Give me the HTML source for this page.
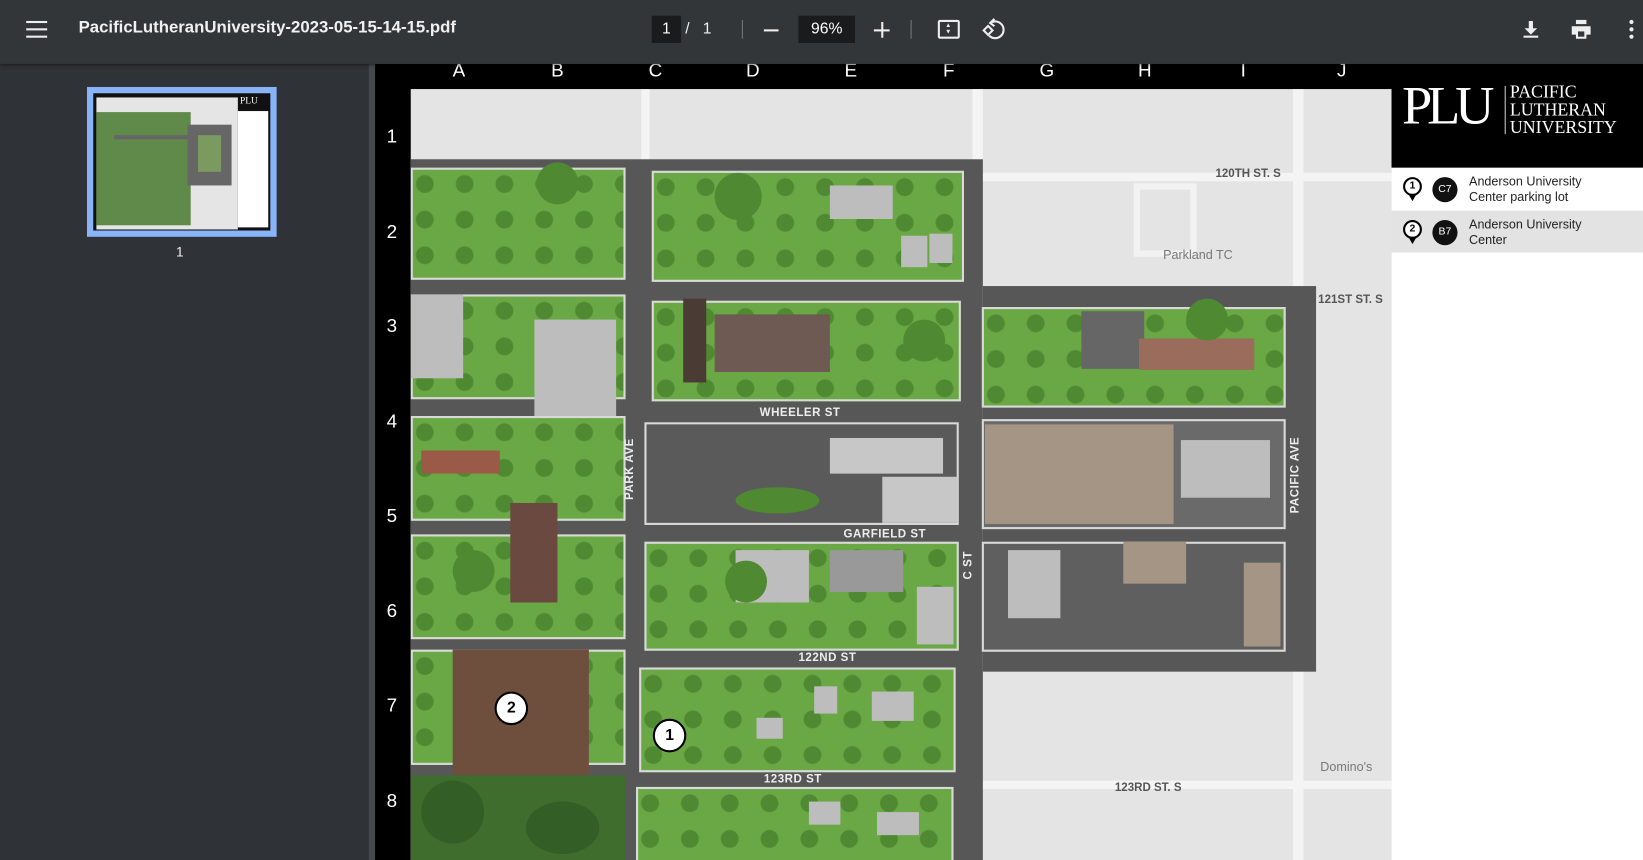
<!DOCTYPE html>
<html><head><meta charset="utf-8"><style>
*{margin:0;padding:0;box-sizing:border-box}
html,body{width:1643px;height:860px;overflow:hidden;background:#2f3236;font-family:"Liberation Sans",sans-serif}
#w{position:absolute;left:0;top:0;width:1643px;height:860px;overflow:hidden}
#s{position:absolute;left:0;top:0;width:1568px;height:821px;overflow:hidden;transform:scale(1.04783);transform-origin:0 0}
.a{position:absolute}
.g{position:absolute;background:#6aa846 radial-gradient(circle at 30% 40%,#4f8a33 0 8px,transparent 9px) 0 0/38px 34px;border:2px solid #d9d9d9}
.t{position:absolute;border-radius:50%;background:#4f8a33}
.b{position:absolute;background:#bdbdbd}
.r{position:absolute;color:#eee;font-size:11px;font-weight:bold;letter-spacing:.5px}
.m{position:absolute;color:#555;font-size:11px}
</style></head><body><div id="w"><div id="s">
<div class="a" style="left:0;top:0;width:1568px;height:61px;background:#323639;box-shadow:0 1px 3px rgba(0,0,0,.5);z-index:2"></div>
<div class="a" style="left:25px;top:20px;width:20px;height:2px;background:#eee;box-shadow:0 7px 0 #eee,0 14px 0 #eee;z-index:3"></div>
<div class="a" style="left:75px;top:18px;color:#f1f1f1;font-size:16px;font-weight:bold;z-index:3">PacificLutheranUniversity-2023-05-15-14-15.pdf</div>
<div style="position:absolute;left:0;top:0;z-index:3">
<div class="a" style="left:622px;top:15px;width:28px;height:26px;background:#191b1c;color:#fff;font-size:15px;text-align:center;line-height:26px">1</div>
<div class="a" style="left:654px;top:19px;color:#eee;font-size:15px;white-space:nowrap">/&nbsp;&nbsp;&nbsp;1</div>
<div class="a" style="left:708px;top:19px;width:1px;height:18px;background:#777"></div>
<div class="a" style="left:729px;top:28px;width:14px;height:2px;background:#eee"></div>
<div class="a" style="left:762px;top:15px;width:54px;height:26px;background:#191b1c;color:#fff;font-size:15px;text-align:center;line-height:26px">96%</div>
<div class="a" style="left:834px;top:28px;width:15px;height:2px;background:#eee"></div>
<div class="a" style="left:841px;top:21px;width:2px;height:15px;background:#eee"></div>
<div class="a" style="left:869px;top:19px;width:1px;height:18px;background:#777"></div>
<div class="a" style="left:895px;top:19px;width:21px;height:18px;border:2px solid #eee;border-radius:2px"></div>
<div class="a" style="left:902px;top:22px;color:#eee;font-size:6px;line-height:6px">▲<br>▼</div>
<svg class="a" style="left:936px;top:16px" width="24" height="24" viewBox="0 0 24 24" fill="none" stroke="#eee" stroke-width="2"><path d="M9 6a8 8 0 1 1-1 12"/><path d="M13 2l-4 4 4 3"/><rect x="4" y="10" width="6" height="6" transform="rotate(45 7 13)"/></svg>
<svg class="a" style="left:1451px;top:18px" width="20" height="20" viewBox="0 0 20 20" fill="#eee"><path d="M8 2h4v7h4l-6 6-6-6h4z"/><rect x="3" y="16" width="14" height="2"/></svg>
<svg class="a" style="left:1498px;top:17px" width="22" height="22" viewBox="0 0 22 22" fill="#eee"><rect x="6" y="2" width="10" height="4"/><path d="M2 8h18v8h-4v4H6v-4H2z"/><rect x="8" y="13" width="6" height="5" fill="#323639"/></svg>
<div class="a" style="left:1555px;top:19px;width:4px;height:4px;border-radius:2px;background:#eee;box-shadow:0 7px 0 #eee,0 14px 0 #eee"></div>
</div>
<div class="a" style="left:352px;top:61px;width:6px;height:760px;background:#45494d"></div>
<div class="a" style="left:83px;top:83px;width:181px;height:143px;background:#8ab4f8"></div>
<div class="a" style="left:89px;top:89px;width:169px;height:131px;background:#111;overflow:hidden">
 <div class="a" style="left:3px;top:4px;width:135px;height:126px;background:#e5e5e5"></div>
 <div class="a" style="left:3px;top:18px;width:90px;height:108px;background:#5f8a4a"></div>
 <div class="a" style="left:20px;top:40px;width:110px;height:4px;background:#666"></div>
 <div class="a" style="left:90px;top:30px;width:42px;height:58px;background:#666"></div>
 <div class="a" style="left:100px;top:40px;width:22px;height:35px;background:#7a9a60"></div>
 <div class="a" style="left:138px;top:17px;width:29px;height:111px;background:#fff"></div>
 <div class="a" style="left:140px;top:2px;color:#fff;font-family:'Liberation Serif';font-size:9px">PLU</div>
</div>
<div class="a" style="left:168px;top:233px;color:#eee;font-size:13px">1</div>
<div class="a" style="left:358px;top:61px;width:1210px;height:760px;background:#000"></div>
<div class="a" style="left:392px;top:85px;width:936px;height:736px;background:#e4e4e4;overflow:hidden">
 <div class="a" style="left:536px;top:0;width:10px;height:736px;background:#f4f4f4"></div>
 <div class="a" style="left:842px;top:0;width:10px;height:736px;background:#f4f4f4"></div>
 <div class="a" style="left:540px;top:80px;width:400px;height:8px;background:#f4f4f4"></div>
 <div class="a" style="left:540px;top:660px;width:400px;height:8px;background:#f4f4f4"></div>
 <div class="a" style="left:220px;top:0;width:8px;height:70px;background:#f4f4f4"></div>
 <div class="a" style="left:690px;top:90px;width:60px;height:70px;border:6px solid #f2f2f2"></div>
 <div class="a" style="left:0;top:67px;width:546px;height:700px;background:#575757"></div>
 <div class="a" style="left:546px;top:188px;width:318px;height:368px;background:#575757"></div>
 <div class="g" style="left:0;top:75px;width:205px;height:107px"></div>
 <div class="g" style="left:230px;top:78px;width:298px;height:106px"></div>
 <div class="b" style="left:468px;top:140px;width:25px;height:30px"></div>
 <div class="b" style="left:495px;top:138px;width:22px;height:28px"></div>
 <div class="b" style="left:400px;top:92px;width:60px;height:32px"></div>
 <div class="g" style="left:0;top:196px;width:205px;height:100px"></div>
 <div class="b" style="left:0;top:196px;width:50px;height:80px"></div>
 <div class="b" style="left:118px;top:220px;width:78px;height:110px"></div>
 <div class="g" style="left:230px;top:202px;width:295px;height:96px"></div>
 <div class="a" style="left:260px;top:200px;width:22px;height:80px;background:#4a3c34"></div>
 <div class="a" style="left:290px;top:215px;width:110px;height:55px;background:#6e5a52"></div>
 <div class="g" style="left:545px;top:208px;width:290px;height:96px"></div>
 <div class="b" style="left:640px;top:212px;width:60px;height:55px;background:#666"></div>
 <div class="a" style="left:695px;top:238px;width:110px;height:30px;background:#9a6c5c"></div>
 <div class="g" style="left:0;top:312px;width:205px;height:100px"></div>
 <div class="a" style="left:10px;top:345px;width:75px;height:22px;background:#9b5a48"></div>
 <div class="a" style="left:223px;top:318px;width:300px;height:98px;background:#5a5a5a;border:2px solid #d9d9d9"></div>
 <div class="b" style="left:400px;top:333px;width:108px;height:34px;background:#c7c7c7"></div>
 <div class="b" style="left:450px;top:370px;width:72px;height:44px;background:#c7c7c7"></div>
 <div class="a" style="left:545px;top:315px;width:290px;height:105px;background:#6a6a6a;border:2px solid #d9d9d9"></div>
 <div class="a" style="left:548px;top:320px;width:180px;height:95px;background:#a59584"></div>
 <div class="b" style="left:735px;top:335px;width:85px;height:55px"></div>
 <div class="g" style="left:0;top:425px;width:205px;height:100px"></div>
 <div class="a" style="left:95px;top:395px;width:45px;height:95px;background:#6a4a40"></div>
 <div class="g" style="left:223px;top:432px;width:300px;height:104px"></div>
 <div class="b" style="left:310px;top:440px;width:70px;height:50px"></div>
 <div class="b" style="left:400px;top:440px;width:70px;height:40px;background:#999"></div>
 <div class="b" style="left:483px;top:475px;width:35px;height:55px"></div>
 <div class="a" style="left:545px;top:432px;width:290px;height:105px;background:#5f5f5f;border:2px solid #d9d9d9"></div>
 <div class="b" style="left:570px;top:440px;width:50px;height:65px"></div>
 <div class="b" style="left:680px;top:432px;width:60px;height:40px;background:#a59584"></div>
 <div class="b" style="left:795px;top:452px;width:35px;height:80px;background:#a59584"></div>
 <div class="g" style="left:0;top:535px;width:205px;height:110px"></div>
 <div class="a" style="left:40px;top:535px;width:130px;height:120px;background:#6e4f3e"></div>
 <div class="g" style="left:218px;top:552px;width:302px;height:100px"></div>
 <div class="b" style="left:385px;top:570px;width:22px;height:26px"></div>
 <div class="b" style="left:440px;top:575px;width:40px;height:28px"></div>
 <div class="b" style="left:330px;top:600px;width:25px;height:20px"></div>
 <div class="a" style="left:0;top:655px;width:205px;height:90px;background:#3e6d2e"></div>
 <div class="g" style="left:215px;top:666px;width:303px;height:90px"></div>
 <div class="b" style="left:380px;top:680px;width:30px;height:22px"></div>
 <div class="b" style="left:445px;top:690px;width:40px;height:22px"></div>
 <div class="t" style="left:120px;top:70px;width:40px;height:40px"></div>
 <div class="t" style="left:290px;top:80px;width:45px;height:45px"></div>
 <div class="t" style="left:470px;top:220px;width:40px;height:40px"></div>
 <div class="t" style="left:310px;top:380px;width:80px;height:25px"></div>
 <div class="t" style="left:40px;top:440px;width:40px;height:40px"></div>
 <div class="t" style="left:740px;top:200px;width:40px;height:40px"></div>
 <div class="t" style="left:300px;top:450px;width:40px;height:40px"></div>
 <div class="t" style="left:10px;top:660px;width:60px;height:60px;background:#335e26"></div>
 <div class="t" style="left:110px;top:680px;width:70px;height:50px;background:#335e26"></div>
 <div class="r" style="left:333px;top:303px">WHEELER ST</div>
 <div class="r" style="left:413px;top:419px">GARFIELD ST</div>
 <div class="r" style="left:370px;top:537px">122ND ST</div>
 <div class="r" style="left:337px;top:653px">123RD ST</div>
 <div class="r" style="left:203px;top:392px;transform:rotate(-90deg);transform-origin:0 0">PARK AVE</div>
 <div class="r" style="left:838px;top:405px;transform:rotate(-90deg);transform-origin:0 0">PACIFIC AVE</div>
 <div class="r" style="left:526px;top:468px;transform:rotate(-90deg);transform-origin:0 0">C ST</div>
 <div class="m" style="left:768px;top:75px;font-weight:bold">120TH ST. S</div>
 <div class="m" style="left:866px;top:195px;font-weight:bold">121ST ST. S</div>
 <div class="m" style="left:672px;top:661px;font-weight:bold">123RD ST. S</div>
 <div class="m" style="left:718px;top:151px;font-size:12px;color:#777">Parkland TC</div>
 <div class="m" style="left:868px;top:640px;font-size:12px;color:#777">Domino's</div>
 <div class="a" style="left:80px;top:575px;width:32px;height:32px;border-radius:50%;background:#fff;border:2px solid #000;text-align:center;line-height:28px;font-weight:bold;font-size:15px">2</div>
 <div class="a" style="left:231px;top:601px;width:32px;height:32px;border-radius:50%;background:#fff;border:2px solid #000;text-align:center;line-height:28px;font-weight:bold;font-size:15px">1</div>
</div>
<div class="a" style="left:358px;top:57px;width:970px;height:24px;color:#fff;font-size:18px">
 <span class="a" style="left:74px">A</span><span class="a" style="left:168px">B</span><span class="a" style="left:261px">C</span><span class="a" style="left:354px">D</span><span class="a" style="left:448px">E</span><span class="a" style="left:542px">F</span><span class="a" style="left:634px">G</span><span class="a" style="left:728px">H</span><span class="a" style="left:826px">I</span><span class="a" style="left:918px">J</span>
</div>
<div class="a" style="left:369px;top:85px;color:#fff;font-size:18px;line-height:90.5px">1<br>2<br>3<br>4<br>5<br>6<br>7<br>8</div>
<div class="a" style="left:1328px;top:160px;width:240px;height:661px;background:#fff"></div>
<div class="a" style="left:1328px;top:201px;width:240px;height:40px;background:#e3e3e3"></div>
<div class="a" style="left:1338px;top:72px;color:#fff;font-family:'Liberation Serif',serif;font-size:52px;letter-spacing:-5px">PLU</div>
<div class="a" style="left:1436px;top:82px;width:1px;height:46px;background:#ccc"></div>
<div class="a" style="left:1441px;top:79px;color:#fff;font-family:'Liberation Serif',serif;font-size:17px;line-height:17px">PACIFIC<br>LUTHERAN<br>UNIVERSITY</div>
<div class="a" style="left:1339px;top:169px;width:18px;height:18px;border-radius:50%;border:2px solid #000;background:#fff;font-size:10px;font-weight:bold;text-align:center;line-height:14px">1</div>
<div class="a" style="left:1344px;top:185px;width:0;height:0;border-left:4px solid transparent;border-right:4px solid transparent;border-top:7px solid #000"></div>
<div class="a" style="left:1367px;top:169px;width:24px;height:24px;border-radius:50%;background:#111;color:#fff;font-size:10px;text-align:center;line-height:24px">C7</div>
<div class="a" style="left:1402px;top:166px;color:#222;font-size:12px;line-height:15px">Anderson University<br>Center parking lot</div>
<div class="a" style="left:1339px;top:210px;width:18px;height:18px;border-radius:50%;border:2px solid #000;background:#fff;font-size:10px;font-weight:bold;text-align:center;line-height:14px">2</div>
<div class="a" style="left:1344px;top:226px;width:0;height:0;border-left:4px solid transparent;border-right:4px solid transparent;border-top:7px solid #000"></div>
<div class="a" style="left:1367px;top:210px;width:24px;height:24px;border-radius:50%;background:#111;color:#fff;font-size:10px;text-align:center;line-height:24px">B7</div>
<div class="a" style="left:1402px;top:207px;color:#222;font-size:12px;line-height:15px">Anderson University<br>Center</div>
</div></div></body></html>
